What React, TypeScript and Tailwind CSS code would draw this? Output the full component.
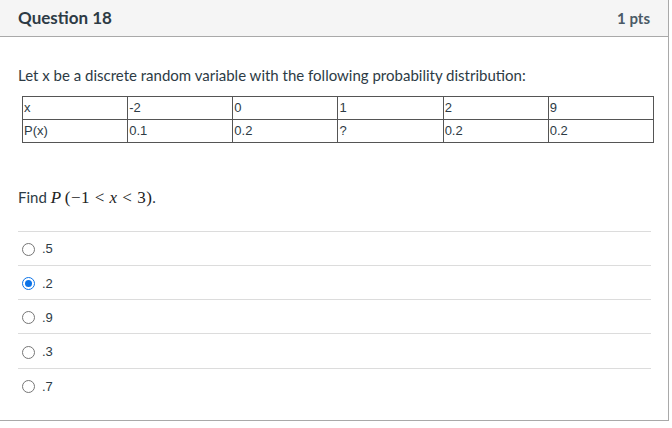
import React from 'react';

const xs = ['x', '-2', '0', '1', '2', '9'];
const ps = ['P(x)', '0.1', '0.2', '?', '0.2', '0.2'];
const options = ['.5', '.2', '.9', '.3', '.7'];

function Radio({ checked }: { checked: boolean }) {
  if (checked) {
    return (
      <span className="w-[13px] h-[13px] rounded-full border-[1.5px] border-[#0b73e8] flex items-center justify-center">
        <span className="w-[7px] h-[7px] rounded-full bg-[#0b73e8]" />
      </span>
    );
  }
  return <span className="w-[13px] h-[13px] rounded-full border border-[#767676] bg-white" />;
}

export default function App() {
  return (
    <div className="w-[672px] h-[428px] bg-white font-['Lato','Liberation_Sans',sans-serif] text-[#2d3b45]">
      <div className="w-[669px] h-[421px] border-r border-b border-[#a9a9a9] flex flex-col">
        {/* header */}
        <div className="h-[37px] bg-[#f5f5f5] border-b border-[#a9a9a9] flex items-center justify-between pl-[18px] pr-[18px]">
          <span className="text-[17px] font-bold">Question 18</span>
          <span className="text-[15px] font-bold text-[#4a5a66]">1 pts</span>
        </div>

        <div className="pl-[18px] pr-[17px]">
          <p className="text-[15px] mt-[28px] leading-[20px]">
            Let x be a discrete random variable with the following probability distribution:
          </p>

          <table className="mt-[11px] ml-[4px] w-[632px] border-collapse border-[1.5px] border-[#222] font-['Liberation_Sans',sans-serif] text-[13px] text-[#2d3b45] table-fixed">
            <tbody>
              {[xs, ps].map((row, i) => (
                <tr key={i} className="h-[23px]">
                  {row.map((c, j) => (
                    <td key={j} className="border border-[#555] px-[1px] leading-[14px] align-middle">
                      {c}
                    </td>
                  ))}
                </tr>
              ))}
            </tbody>
          </table>

          <p className="mt-[42px] text-[15px] flex items-baseline gap-[4px]">
            <span>Find</span>
            <span className="font-['Liberation_Serif','DejaVu_Serif',serif] text-[17px] text-[#222] tracking-[0.5px]">
              <i>P</i>
              <span className="ml-[3px]">(−1 &lt; </span>
              <i>x</i>
              <span> &lt; 3)</span>
            </span>
            <span className="-ml-[4px]">.</span>
          </p>

          <div className="mt-[20px]">
            {options.map((o, i) => (
              <div key={o} className="h-[34.3px] border-t border-[#dcdcdc] flex items-center gap-[7px] pl-[4px] pt-[2px]">
                <Radio checked={i === 1} />
                <span className="font-['Liberation_Sans',sans-serif] text-[13px] text-[#2d3b45]">{o}</span>
              </div>
            ))}
          </div>
        </div>
      </div>
    </div>
  );
}
